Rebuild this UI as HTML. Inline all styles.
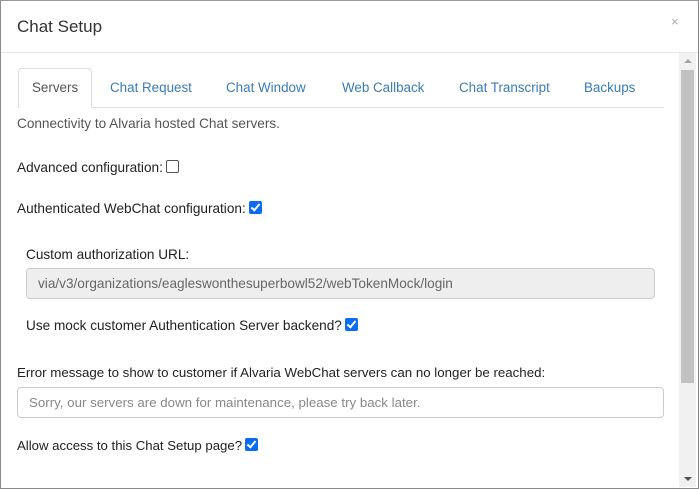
<!DOCTYPE html>
<html><head><style>
*{box-sizing:border-box;margin:0;padding:0}
body{width:699px;height:489px;background:#fff;font-family:"Liberation Sans",sans-serif;color:#333;position:relative;overflow:hidden}
.frame{position:absolute;left:0;top:0;width:699px;height:489px;border:1px solid #8a8a8a;border-top-color:#999}
.a{position:absolute;white-space:nowrap;font-size:13.6px}
.cb{display:inline-block;vertical-align:-1px;margin-left:3px;position:relative;width:13px;height:13px;border-radius:2px}
.on{background:#0a6cf0}
.on::after{content:"";position:absolute;left:4px;top:1px;width:3px;height:7px;border:solid #fff;border-width:0 2px 2px 0;transform:rotate(40deg)}
.off{border:1px solid #555;background:#fff}
.tab{position:absolute;top:80px;font-size:13.4px;color:#3a7cb8;white-space:nowrap}
</style></head><body>
<div class="frame"></div>
<div class="a" style="left:17px;top:17px;font-size:17px;color:#333">Chat Setup</div>
<div class="a" style="left:671px;top:14px;font-size:13px;color:#aaa">×</div>
<div class="a" style="left:1px;top:52px;width:697px;height:1px;background:#e5e5e5"></div>
<div class="a" style="left:679px;top:53px;width:17px;height:434px;background:#f1f1f1"></div>
<div class="a" style="left:681px;top:70px;width:13px;height:313px;background:#c1c1c1"></div>
<div class="a" style="left:684px;top:59px;width:0;height:0;border-left:4px solid transparent;border-right:4px solid transparent;border-bottom:4px solid #a3a3a3"></div>
<div class="a" style="left:684px;top:477px;width:0;height:0;border-left:4px solid transparent;border-right:4px solid transparent;border-top:4px solid #505050"></div>
<div class="a" style="left:17px;top:107px;width:647px;height:1px;background:#ddd"></div>
<div class="a" style="left:18px;top:68px;width:74px;height:40px;border:1px solid #ddd;border-bottom-color:#fff;border-radius:4px 4px 0 0;background:#fff"></div>
<div class="tab" style="left:32px;color:#555">Servers</div>
<div class="tab" style="left:110px">Chat Request</div>
<div class="tab" style="left:226px">Chat Window</div>
<div class="tab" style="left:342px">Web Callback</div>
<div class="tab" style="left:459px">Chat Transcript</div>
<div class="tab" style="left:584px">Backups</div>
<div class="a" style="left:17px;top:116px;color:#555">Connectivity to Alvaria hosted Chat servers.</div>
<div class="a" style="left:17px;top:160px;color:#222">Advanced configuration:<span class="cb off"></span></div>
<div class="a" style="left:17px;top:201px;color:#222">Authenticated WebChat configuration:<span class="cb on"></span></div>
<div class="a" style="left:26px;top:247px;color:#222">Custom authorization URL:</div>
<div class="a" style="left:26px;top:268px;width:629px;height:31px;background:#eee;border:1px solid #ccc;border-radius:4px"></div>
<div class="a" style="left:38px;top:276px;color:#666">via/v3/organizations/eagleswonthesuperbowl52/webTokenMock/login</div>
<div class="a" style="left:26px;top:318px;color:#222">Use mock customer Authentication Server backend?<span class="cb on"></span></div>
<div class="a" style="left:17px;top:365px;color:#222;font-size:13.3px">Error message to show to customer if Alvaria WebChat servers can no longer be reached:</div>
<div class="a" style="left:17px;top:387px;width:647px;height:31px;background:#fff;border:1px solid #ccc;border-radius:4px"></div>
<div class="a" style="left:29px;top:395px;color:#888;font-size:13.3px">Sorry, our servers are down for maintenance, please try back later.</div>
<div class="a" style="left:17px;top:438px;color:#222;font-size:13.2px">Allow access to this Chat Setup page?<span class="cb on"></span></div>
</body></html>
